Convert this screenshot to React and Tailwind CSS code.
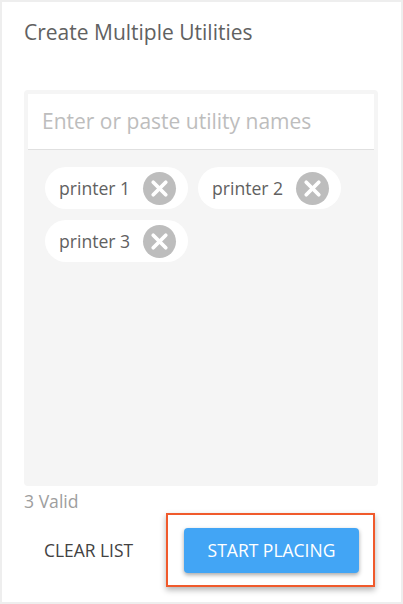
import React from 'react';
import { X } from 'lucide-react';

const utilities = ['printer 1', 'printer 2', 'printer 3'];

const Chip = ({ name }) => (
  <div className="flex h-[42px] w-[143px] items-center justify-between rounded-full bg-white pl-[14px] pr-[12px]">
    <span className="text-[17.6px] text-[#616161]">{name}</span>
    <span className="flex h-[33px] w-[33px] items-center justify-center rounded-full bg-[#bdbdbd]">
      <X size={25} strokeWidth={3.6} className="text-white" />
    </span>
  </div>
);

const App = () => {
  return (
    <div className="h-[604px] w-[403px] bg-[#eeeeee] p-[2px] font-['Open_Sans',sans-serif]">
      <div className="flex h-[600px] flex-col bg-white pl-[22px] pr-[23px]">
        <h1 className="mt-[16px] text-[21px] leading-[29px] font-normal text-[#616161]">
          Create Multiple Utilities
        </h1>

        {/* List box */}
        <div className="mt-[43px] flex h-[396px] flex-col rounded bg-[#f5f5f5] p-[4px]">
          <div className="h-[56px] border-b border-[#e0e0e0] bg-white pl-[14px] pt-[12px] text-[21px] leading-[30px] text-[#bdbdbd]">
            Enter or paste utility names
          </div>
          <div className="flex flex-wrap gap-x-[10px] gap-y-[11px] pl-[17px] pt-[17px]">
            {utilities.map((name) => (
              <Chip key={name} name={name} />
            ))}
          </div>
        </div>

        <div className="mt-[4px] text-[17.6px] leading-[22px] text-[#9e9e9e]">3 Valid</div>

        {/* Actions */}
        <div className="mt-[1px] flex items-center">
          <span className="ml-[20px] w-[122px] text-[17.4px] text-[#424242]">CLEAR LIST</span>
          <div className="border-2 border-[#f05a2c] pl-[16px] pr-[14px] pt-[13px] pb-[12px] shadow-[0_3px_6px_rgba(0,0,0,0.3)]">
            <button className="h-[45px] w-[175px] rounded bg-[#42a5f5] text-[17.5px] text-white shadow-[0_2px_4px_rgba(0,0,0,0.35)]">
              START PLACING
            </button>
          </div>
        </div>
      </div>
    </div>
  );
};

export default App;
